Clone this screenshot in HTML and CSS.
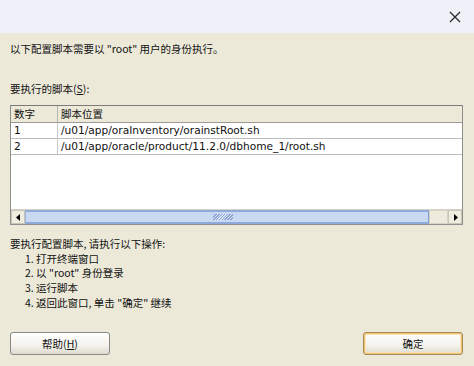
FILE: index.html
```html
<!DOCTYPE html>
<html>
<head>
<meta charset="utf-8">
<link rel="stylesheet" href="styles.css">
</head>
<body>
<div class="window">
  <div class="titlebar">
    <svg class="close" width="12" height="12" viewBox="0 0 12 12"><path d="M1 1 L11 11 M11 1 L1 11" stroke="#2a2a2a" stroke-width="1.3" fill="none"/></svg>
  </div>
  <div class="content">
    <div class="msg">以下配置脚本需要以 "root" 用户的身份执行。</div>
    <div class="label">要执行的脚本(<span class="ul">S</span>):</div>
    <div class="table">
      <div class="row head">
        <div class="c1">数字</div>
        <div class="c2">脚本位置</div>
      </div>
      <div class="row">
        <div class="c1">1</div>
        <div class="c2">/u01/app/oraInventory/orainstRoot.sh</div>
      </div>
      <div class="row">
        <div class="c1">2</div>
        <div class="c2">/u01/app/oracle/product/11.2.0/dbhome_1/root.sh</div>
      </div>
      <div class="empty"></div>
      <div class="hscroll">
        <div class="sbtn"><svg width="5" height="7" viewBox="0 0 5 7"><path d="M4 0 L0 3.5 L4 7 Z" fill="#000"/></svg></div>
        <div class="thumb"><div class="grip"></div></div>
        <div class="track"></div>
        <div class="sbtn"><svg width="5" height="7" viewBox="0 0 5 7"><path d="M1 0 L5 3.5 L1 7 Z" fill="#000"/></svg></div>
      </div>
    </div>
    <div class="steps">
      <div class="line">要执行配置脚本, 请执行以下操作:</div>
      <div class="line item">1. 打开终端窗口</div>
      <div class="line item">2. 以 "root" 身份登录</div>
      <div class="line item">3. 运行脚本</div>
      <div class="line item">4. 返回此窗口, 单击 "确定" 继续</div>
    </div>
    <div class="buttons">
      <div class="btn">帮助(<span class="ul">H</span>)</div>
      <div class="btn default">确定</div>
    </div>
  </div>
</div>
</body>
</html>
```

FILE: styles.css
```css
html, body {
  margin: 0;
  padding: 0;
}
body {
  width: 474px;
  height: 366px;
  overflow: hidden;
  font-family: "DejaVu Sans", "Noto Sans CJK SC", sans-serif;
  font-size: 10.6px;
  color: #111;
}
.window {
  width: 474px;
  height: 366px;
  background: #ece9d9;
  display: flex;
  flex-direction: column;
}
.titlebar {
  height: 33px;
  background: #eff1f9;
  display: flex;
  align-items: center;
  justify-content: flex-end;
  padding-right: 13px;
  box-sizing: border-box;
}
.close {
  display: block;
}
.content {
  flex: 1;
  display: flex;
  flex-direction: column;
  padding: 0 11px 0 10px;
}
.cjk, .msg, .label, .steps, .btn, .row.head {
  font-family: "Noto Sans CJK SC", sans-serif;
  font-size: 10.5px;
}
.msg {
  line-height: 15px;
  margin-top: 8px;
}
.label {
  line-height: 15px;
  margin-top: 25px;
}
.ul {
  text-decoration: underline;
}
.table {
  margin-top: 9px;
  height: 120px;
  border: 1px solid #8e8f8f;
  border-top-color: #7b7b7b;
  background: #fff;
  display: flex;
  flex-direction: column;
  box-sizing: border-box;
}
.row {
  display: flex;
  height: 16px;
  line-height: 15px;
  border-bottom: 1px solid #bdbdbd;
  box-sizing: border-box;
}
.row.head {
  background: #ece9d9;
  border-bottom: 1px solid #9a9a9a;
  height: 17px;
  line-height: 16px;
}
.c1 {
  width: 47px;
  padding-left: 3px;
  box-sizing: border-box;
  border-right: 1px solid #c8c8c8;
}
.row.head .c1 {
  border-right: 1px solid #b4b4b4;
}
.c2 {
  padding-left: 3px;
}
.empty {
  flex: 1;
}
.hscroll {
  height: 14px;
  display: flex;
  background: #eeebdc;
  border-top: 1px solid #d6d3c6;
}
.sbtn {
  width: 14px;
  flex: none;
  display: flex;
  align-items: center;
  justify-content: center;
  background: #efece0;
  border: 1px solid #c9c6b9;
  box-sizing: border-box;
}
.thumb {
  width: 404px;
  flex: none;
  box-sizing: border-box;
  background: #c8d9f1;
  border-top: 2px solid #8fa9da;
  border-bottom: 2px solid #8fa9da;
  border-left: 1px solid #9db3de;
  border-right: 1px solid #7f9cd4;
  display: flex;
  align-items: center;
  justify-content: center;
}
.grip {
  width: 20px;
  height: 6px;
  margin-right: 8px;
  background: repeating-linear-gradient(135deg, #7c96cf 0 1px, #dbe6f7 1px 2px);
  opacity: 0.8;
}
.track {
  flex: 1;
  background: #eeebdd;
  border: 1px solid #d6d3c7;
  box-sizing: border-box;
}
.steps {
  margin-top: 12px;
}
.line {
  line-height: 14.7px;
}
.item {
  padding-left: 15px;
}
.buttons {
  margin-top: 21px;
  display: flex;
  justify-content: space-between;
}
.btn {
  width: 100px;
  height: 23px;
  box-sizing: border-box;
  border: 1px solid #8a8a86;
  border-radius: 3px;
  background: linear-gradient(#ffffff, #f3f2ec 60%, #dedbcf);
  display: flex;
  align-items: center;
  justify-content: center;
  color: #111;
}
.btn.default {
  border: 1px solid #a28a5a;
  box-shadow: inset 0 0 0 1px #f4c173, inset 0 0 0 2px #fbe3b4;
}
```
